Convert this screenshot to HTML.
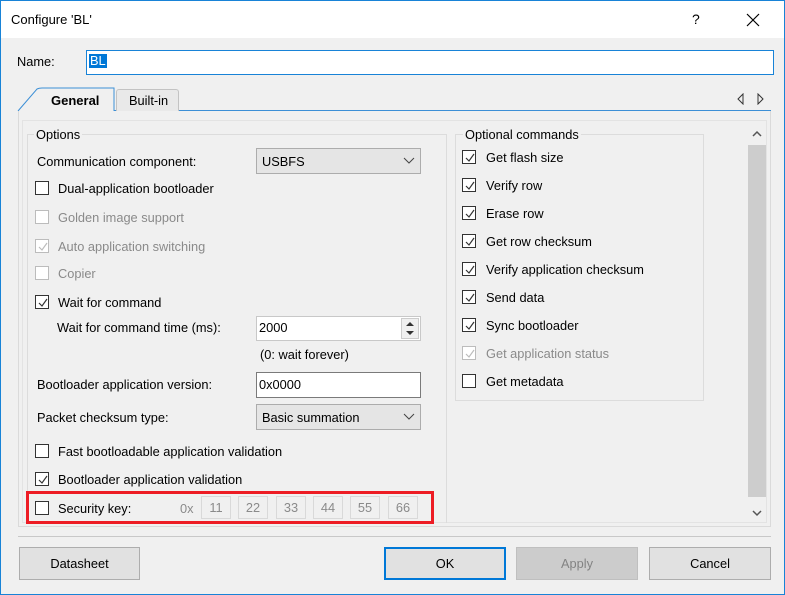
<!DOCTYPE html>
<html><head><style>
*{box-sizing:border-box;margin:0;padding:0}
body{width:785px;height:595px;overflow:hidden;font-family:"Liberation Sans",sans-serif;font-size:12.8px;color:#000;background:#f0f0f0;position:relative}
.a{position:absolute}
.frame{position:absolute;left:0;top:0;width:785px;height:595px;border:1px solid #1883d7;pointer-events:none}
.title{position:absolute;left:0;top:0;width:785px;height:38px;background:#fff}
.t{position:absolute;white-space:nowrap;line-height:14px}
.cb{position:absolute;width:14px;height:14px;border:1px solid #333;background:#fff}
.cb.dis{border-color:#bcbcbc}
.cb svg{position:absolute;left:1px;top:1px}
.dim{color:#8a8a8a}
.inp{position:absolute;background:#fff;border:1px solid #7a7a7a}
.combo{position:absolute;background:#e5e5e5;border:1px solid #acacac}
.btn{position:absolute;height:33px;border:1px solid #adadad;background:#e1e1e1;text-align:center;line-height:31px}
.hx{position:absolute;top:496px;width:30px;height:23px;border:1px solid #d9d9d9;color:#8a8a8a;text-align:center;line-height:21px}
.clip{position:absolute;left:0;top:0;width:785px;height:523px;overflow:hidden}
</style></head><body>
<div class="title"></div>
<div class="t" style="left:11px;top:13px;font-size:13px">Configure 'BL'</div>
<div class="t" style="left:692px;top:12px;font-size:14px">?</div>
<svg class="a" style="left:746px;top:13px" width="14" height="14"><path d="M1 1L13 13M13 1L1 13" stroke="#000" stroke-width="1.2"/></svg>

<div class="t" style="left:17px;top:55px">Name:</div>
<div class="inp" style="left:86px;top:50px;width:688px;height:25px;border-color:#1883d7"></div>
<div class="a" style="left:89px;top:54px;background:#0078d7;color:#fff;line-height:14px;padding:0 1px">BL</div>

<!-- tabs -->
<div class="a" style="left:18px;top:110px;width:753px;height:1px;background:#3c8fd6"></div>
<svg class="a" style="left:17px;top:87px" width="100" height="25"><path d="M1 24 L20 2 Q22 1 25 1 L97 1 L97 24" fill="#f0f0f0" stroke="#3c8fd6"/></svg>
<div class="t" style="left:51px;top:94px;font-weight:bold;font-size:13px">General</div>
<div class="a" style="left:116px;top:89px;width:63px;height:22px;border:1px solid #c3c3c3;border-bottom:none;border-radius:3px 3px 0 0;background:#e9e9e9"></div>
<div class="t" style="left:129px;top:94px">Built-in</div>
<svg class="a" style="left:736px;top:93px" width="30" height="12"><path d="M7 1L2 6L7 11Z M22 1L27 6L22 11Z" fill="none" stroke="#333"/></svg>

<!-- panel -->
<div class="a" style="left:18px;top:111px;width:753px;height:416px;border:1px solid #dadada;border-top:none"></div>
<div class="a" style="left:22px;top:120px;width:745px;height:403px;border:1px solid #e3e3e3"></div>
<div class="a" style="left:748px;top:145px;width:18px;height:352px;background:#cdcdcd"></div>
<svg class="a" style="left:752px;top:130px" width="10" height="8"><path d="M1 6L5 2L9 6" fill="none" stroke="#555" stroke-width="1.5"/></svg>
<svg class="a" style="left:752px;top:509px" width="10" height="8"><path d="M1 2L5 6L9 2" fill="none" stroke="#555" stroke-width="1.5"/></svg>

<div class="clip">
<!-- options group -->
<div class="a" style="left:27px;top:134px;width:420px;height:400px;border:1px solid #dcdcdc"></div>
<div class="t" style="left:34px;top:128px;background:#f0f0f0;padding:0 2px">Options</div>
<div class="t" style="left:37px;top:155px">Communication component:</div>
<div class="combo" style="left:256px;top:148px;width:165px;height:26px"></div>
<div class="t" style="left:262px;top:155px">USBFS</div>
<svg class="a" style="left:403px;top:157px" width="12" height="8"><path d="M1 1L6 6L11 1" fill="none" stroke="#444"/></svg>

<div class="cb" style="left:35px;top:181px"></div><div class="t" style="left:58px;top:182px">Dual-application bootloader</div>
<div class="cb dis" style="left:35px;top:210px"></div><div class="t dim" style="left:58px;top:211px">Golden image support</div>
<div class="cb dis" style="left:35px;top:239px"><svg width="12" height="12"><path d="M2 6L5 9L10 2" fill="none" stroke="#bcbcbc" stroke-width="1.2"/></svg></div><div class="t dim" style="left:58px;top:240px">Auto application switching</div>
<div class="cb dis" style="left:35px;top:266px"></div><div class="t dim" style="left:58px;top:267px">Copier</div>
<div class="cb" style="left:35px;top:295px"><svg width="12" height="12"><path d="M2 6L5 9L10 2" fill="none" stroke="#333" stroke-width="1.2"/></svg></div><div class="t" style="left:58px;top:296px">Wait for command</div>
<div class="t" style="left:57px;top:321px">Wait for command time (ms):</div>
<div class="inp" style="left:256px;top:316px;width:165px;height:25px;border-color:#c8c8c8"></div>
<div class="t" style="left:259px;top:321px">2000</div>
<div class="a" style="left:401px;top:318px;width:18px;height:21px;border:1px solid #ccc;background:#f0f0f0"></div>
<svg class="a" style="left:405px;top:321px" width="10" height="16"><path d="M1 5L5 1L9 5Z M1 10L9 10L5 14Z" fill="#333"/></svg>
<div class="t" style="left:260px;top:348px">(0: wait forever)</div>
<div class="t" style="left:37px;top:378px">Bootloader application version:</div>
<div class="inp" style="left:256px;top:372px;width:165px;height:26px"></div>
<div class="t" style="left:259px;top:378px">0x0000</div>
<div class="t" style="left:37px;top:411px">Packet checksum type:</div>
<div class="combo" style="left:256px;top:404px;width:165px;height:26px"></div>
<div class="t" style="left:262px;top:411px">Basic summation</div>
<svg class="a" style="left:403px;top:413px" width="12" height="8"><path d="M1 1L6 6L11 1" fill="none" stroke="#444"/></svg>
<div class="cb" style="left:35px;top:444px"></div><div class="t" style="left:58px;top:445px">Fast bootloadable application validation</div>
<div class="cb" style="left:35px;top:472px"><svg width="12" height="12"><path d="M2 6L5 9L10 2" fill="none" stroke="#333" stroke-width="1.2"/></svg></div><div class="t" style="left:58px;top:473px">Bootloader application validation</div>
</div>

<div class="a" style="left:26px;top:491px;width:408px;height:33px;border:3px solid #ed1c24;background:#f0f0f0"></div>
<div class="cb" style="left:35px;top:501px"></div><div class="t" style="left:58px;top:502px">Security key:</div>
<div class="t dim" style="left:180px;top:502px">0x</div>
<div class="hx" style="left:201px">11</div><div class="hx" style="left:238px">22</div><div class="hx" style="left:276px">33</div>
<div class="hx" style="left:313px">44</div><div class="hx" style="left:350px">55</div><div class="hx" style="left:388px">66</div>

<!-- optional commands -->
<div class="a" style="left:455px;top:134px;width:249px;height:267px;border:1px solid #dcdcdc"></div>
<div class="t" style="left:463px;top:128px;background:#f0f0f0;padding:0 2px">Optional commands</div>
<div class="cb" style="left:462px;top:150px"><svg width="12" height="12"><path d="M2 6L5 9L10 2" fill="none" stroke="#333" stroke-width="1.2"/></svg></div><div class="t" style="left:486px;top:151px">Get flash size</div>
<div class="cb" style="left:462px;top:178px"><svg width="12" height="12"><path d="M2 6L5 9L10 2" fill="none" stroke="#333" stroke-width="1.2"/></svg></div><div class="t" style="left:486px;top:179px">Verify row</div>
<div class="cb" style="left:462px;top:206px"><svg width="12" height="12"><path d="M2 6L5 9L10 2" fill="none" stroke="#333" stroke-width="1.2"/></svg></div><div class="t" style="left:486px;top:207px">Erase row</div>
<div class="cb" style="left:462px;top:234px"><svg width="12" height="12"><path d="M2 6L5 9L10 2" fill="none" stroke="#333" stroke-width="1.2"/></svg></div><div class="t" style="left:486px;top:235px">Get row checksum</div>
<div class="cb" style="left:462px;top:262px"><svg width="12" height="12"><path d="M2 6L5 9L10 2" fill="none" stroke="#333" stroke-width="1.2"/></svg></div><div class="t" style="left:486px;top:263px">Verify application checksum</div>
<div class="cb" style="left:462px;top:290px"><svg width="12" height="12"><path d="M2 6L5 9L10 2" fill="none" stroke="#333" stroke-width="1.2"/></svg></div><div class="t" style="left:486px;top:291px">Send data</div>
<div class="cb" style="left:462px;top:318px"><svg width="12" height="12"><path d="M2 6L5 9L10 2" fill="none" stroke="#333" stroke-width="1.2"/></svg></div><div class="t" style="left:486px;top:319px">Sync bootloader</div>
<div class="cb dis" style="left:462px;top:346px"><svg width="12" height="12"><path d="M2 6L5 9L10 2" fill="none" stroke="#bcbcbc" stroke-width="1.2"/></svg></div><div class="t dim" style="left:486px;top:347px">Get application status</div>
<div class="cb" style="left:462px;top:374px"></div><div class="t" style="left:486px;top:375px">Get metadata</div>

<!-- bottom -->
<div class="a" style="left:18px;top:536px;width:753px;height:1px;background:#c8c8c8"></div>
<div class="btn" style="left:19px;top:547px;width:121px">Datasheet</div>
<div class="btn" style="left:384px;top:547px;width:122px;border:2px solid #0078d7;line-height:29px">OK</div>
<div class="btn" style="left:516px;top:547px;width:122px;background:#cccccc;border-color:#bfbfbf;color:#838383">Apply</div>
<div class="btn" style="left:649px;top:547px;width:122px">Cancel</div>
<div class="frame"></div>
</body></html>
